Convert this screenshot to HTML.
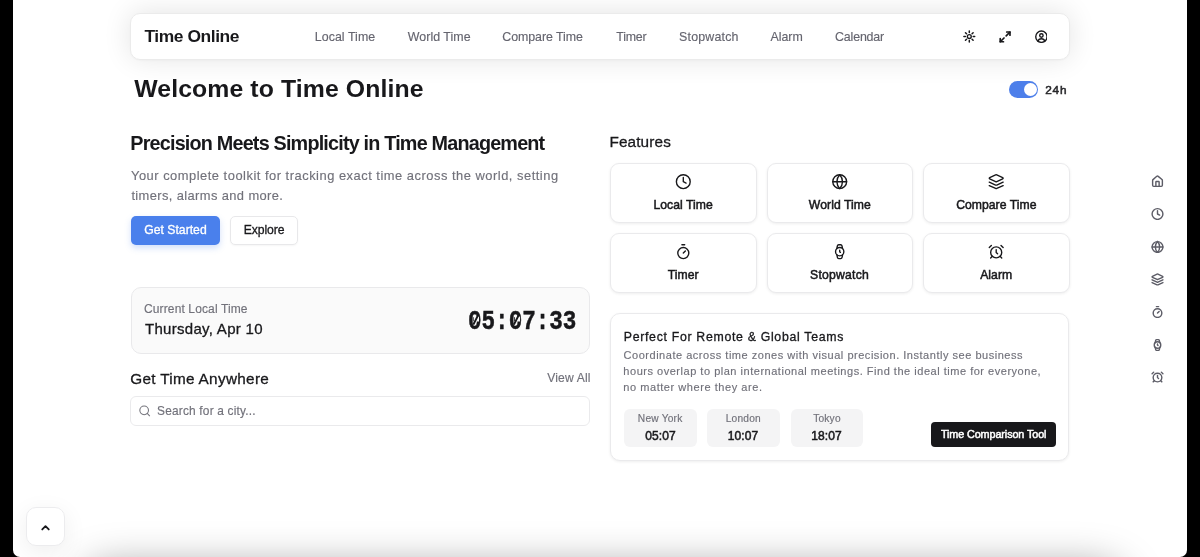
<!DOCTYPE html>
<html>
<head>
<meta charset="utf-8">
<style>
*{margin:0;padding:0;box-sizing:border-box;}
html,body{width:1200px;height:557px;overflow:hidden;background:#000;}
body{font-family:"Liberation Sans",sans-serif;color:#18181b;position:relative;}
.page{position:absolute;left:13px;top:-20px;width:1174px;height:577px;background:#fff;border-radius:0 0 7px 7px;overflow:hidden;}
.abs{position:absolute;white-space:nowrap;}
.nav{position:absolute;left:129.8px;top:13.3px;width:940px;height:46.6px;background:#fff;border-radius:10px;border:1px solid #ebebeb;box-shadow:0 -1px 28px rgba(0,0,0,0.11),0 1px 2px rgba(0,0,0,0.03);}
.t{position:absolute;white-space:nowrap;line-height:1;z-index:5;}
svg{position:absolute;z-index:5;fill:none;stroke:currentColor;stroke-linecap:round;stroke-linejoin:round;}
.card{position:absolute;background:#fff;border:1px solid #eaeaec;border-radius:9px;box-shadow:0 1px 3px rgba(0,0,0,0.07);}
.city{position:absolute;background:#f4f4f5;border-radius:6px;width:72.6px;height:38.7px;top:408.5px;}
</style>
</head>
<body>
<div class="page"></div>
<div id="root" style="position:absolute;left:0;top:0;width:1200px;height:557px;will-change:transform;">

<!-- NAV -->
<div class="nav"></div>
<div class="t" id="logo" style="left:144.38px;top:27.86px;font-size:17.40px;letter-spacing:-0.417px;font-weight:700;color:#18181b;">Time Online</div>
<div class="t" id="n1" style="left:314.81px;top:31.11px;font-size:12.40px;letter-spacing:0.051px;-webkit-text-stroke:0.15px #65656f;color:#65656f;">Local Time</div>
<div class="t" id="n2" style="left:407.84px;top:31.11px;font-size:12.40px;letter-spacing:0.032px;-webkit-text-stroke:0.15px #65656f;color:#65656f;">World Time</div>
<div class="t" id="n3" style="left:502.24px;top:30.91px;font-size:12.40px;letter-spacing:-0.056px;-webkit-text-stroke:0.15px #65656f;color:#65656f;">Compare Time</div>
<div class="t" id="n4" style="left:616.23px;top:31.11px;font-size:12.40px;letter-spacing:-0.179px;-webkit-text-stroke:0.15px #65656f;color:#65656f;">Timer</div>
<div class="t" id="n5" style="left:679.02px;top:30.91px;font-size:12.40px;letter-spacing:0.204px;-webkit-text-stroke:0.15px #65656f;color:#65656f;">Stopwatch</div>
<div class="t" id="n6" style="left:770.48px;top:31.11px;font-size:12.40px;letter-spacing:-0.010px;-webkit-text-stroke:0.15px #65656f;color:#65656f;">Alarm</div>
<div class="t" id="n7" style="left:835.10px;top:31.11px;font-size:12.40px;letter-spacing:-0.169px;-webkit-text-stroke:0.15px #65656f;color:#65656f;">Calendar</div>
<div class="t" id="welcome" style="left:134.21px;top:77.43px;font-size:24.80px;letter-spacing:0.105px;font-weight:700;color:#18181b;">Welcome to Time Online</div>
<div class="t" id="h24" style="left:1045.22px;top:85.47px;font-size:11.80px;letter-spacing:0.839px;-webkit-text-stroke:0.50px #27272a;color:#27272a;">24h</div>
<div class="t" id="prec" style="left:130.32px;top:133.83px;font-size:19.80px;letter-spacing:-0.806px;font-weight:700;color:#18181b;">Precision Meets Simplicity in Time Management</div>
<div class="t" id="p1" style="left:130.96px;top:169.82px;font-size:12.90px;letter-spacing:0.510px;-webkit-text-stroke:0.15px #71717a;color:#71717a;">Your complete toolkit for tracking exact time across the world, setting</div>
<div class="t" id="p2" style="left:131.38px;top:190.44px;font-size:12.90px;letter-spacing:0.390px;-webkit-text-stroke:0.15px #71717a;color:#71717a;">timers, alarms and more.</div>
<div class="t" id="btn1" style="left:144.29px;top:223.86px;font-size:12.20px;letter-spacing:0.005px;-webkit-text-stroke:0.30px #ffffff;color:#ffffff;">Get Started</div>
<div class="t" id="btn2" style="left:243.63px;top:224.36px;font-size:12.20px;letter-spacing:-0.079px;-webkit-text-stroke:0.30px #18181b;color:#18181b;">Explore</div>
<div class="t" id="clt" style="left:144.01px;top:302.99px;font-size:12.00px;letter-spacing:0.127px;-webkit-text-stroke:0.15px #71717a;color:#71717a;">Current Local Time</div>
<div class="t" id="date" style="left:144.97px;top:321.15px;font-size:15.00px;letter-spacing:0.295px;-webkit-text-stroke:0.30px #18181b;color:#18181b;">Thursday, Apr 10</div>
<div class="t" id="clock" style="left:468.44px;top:309.09px;font-size:27.00px;letter-spacing:0.000px;font-weight:700;-webkit-text-stroke:0.5px #18181b;color:#18181b;font-family:'Liberation Mono',monospace;transform:scaleX(0.8360);transform-origin:0 0;">05:07:33</div>
<div class="t" id="gta" style="left:130.29px;top:370.83px;font-size:15.30px;letter-spacing:0.316px;-webkit-text-stroke:0.30px #18181b;color:#18181b;">Get Time Anywhere</div>
<div class="t" id="va" style="left:547.17px;top:372.10px;font-size:12.10px;letter-spacing:0.176px;-webkit-text-stroke:0.15px #71717a;color:#71717a;">View All</div>
<div class="t" id="search" style="left:157.04px;top:405.98px;font-size:11.90px;letter-spacing:0.192px;-webkit-text-stroke:0.15px #71717a;color:#71717a;">Search for a city...</div>
<div class="t" id="feat" style="left:609.40px;top:134.32px;font-size:15.30px;letter-spacing:0.147px;-webkit-text-stroke:0.30px #18181b;color:#18181b;">Features</div>
<div class="t" id="f1" style="left:653.38px;top:199.23px;font-size:12.20px;letter-spacing:0.047px;-webkit-text-stroke:0.50px #18181b;color:#18181b;">Local Time</div>
<div class="t" id="f2" style="left:808.85px;top:199.18px;font-size:12.20px;letter-spacing:0.059px;-webkit-text-stroke:0.50px #18181b;color:#18181b;">World Time</div>
<div class="t" id="f3" style="left:956.14px;top:199.14px;font-size:12.20px;letter-spacing:0.033px;-webkit-text-stroke:0.50px #18181b;color:#18181b;">Compare Time</div>
<div class="t" id="f4" style="left:667.86px;top:269.08px;font-size:12.20px;letter-spacing:0.020px;-webkit-text-stroke:0.50px #18181b;color:#18181b;">Timer</div>
<div class="t" id="f5" style="left:810.04px;top:269.24px;font-size:12.20px;letter-spacing:0.240px;-webkit-text-stroke:0.50px #18181b;color:#18181b;">Stopwatch</div>
<div class="t" id="f6" style="left:980.18px;top:269.01px;font-size:12.20px;letter-spacing:0.046px;-webkit-text-stroke:0.50px #18181b;color:#18181b;">Alarm</div>
<div class="t" id="ptitle" style="left:623.77px;top:330.59px;font-size:12.30px;letter-spacing:0.695px;-webkit-text-stroke:0.30px #18181b;color:#18181b;">Perfect For Remote &amp; Global Teams</div>
<div class="t" id="pp1" style="left:623.55px;top:349.72px;font-size:11.00px;letter-spacing:0.524px;-webkit-text-stroke:0.15px #71717a;color:#71717a;">Coordinate across time zones with visual precision. Instantly see business</div>
<div class="t" id="pp2" style="left:623.37px;top:365.58px;font-size:11.00px;letter-spacing:0.520px;-webkit-text-stroke:0.15px #71717a;color:#71717a;">hours overlap to plan international meetings. Find the ideal time for everyone,</div>
<div class="t" id="pp3" style="left:623.29px;top:382.18px;font-size:11.00px;letter-spacing:0.555px;-webkit-text-stroke:0.15px #71717a;color:#71717a;">no matter where they are.</div>
<div class="t" id="c1" style="left:637.83px;top:413.85px;font-size:10.20px;letter-spacing:0.200px;-webkit-text-stroke:0.15px #71717a;color:#71717a;">New York</div>
<div class="t" id="c2" style="left:725.70px;top:413.73px;font-size:10.20px;letter-spacing:0.200px;-webkit-text-stroke:0.15px #71717a;color:#71717a;">London</div>
<div class="t" id="c3" style="left:813.17px;top:414.28px;font-size:10.20px;letter-spacing:0.200px;-webkit-text-stroke:0.15px #71717a;color:#71717a;">Tokyo</div>
<div class="t" id="ct1" style="left:645.30px;top:430.03px;font-size:12.00px;letter-spacing:0.100px;-webkit-text-stroke:0.50px #18181b;color:#18181b;">05:07</div>
<div class="t" id="ct2" style="left:727.80px;top:429.68px;font-size:12.00px;letter-spacing:0.100px;-webkit-text-stroke:0.50px #18181b;color:#18181b;">10:07</div>
<div class="t" id="ct3" style="left:811.30px;top:429.73px;font-size:12.00px;letter-spacing:0.100px;-webkit-text-stroke:0.50px #18181b;color:#18181b;">18:07</div>
<div class="t" id="tool" style="left:940.89px;top:428.57px;font-size:10.80px;letter-spacing:-0.093px;-webkit-text-stroke:0.50px #ffffff;color:#ffffff;">Time Comparison Tool</div>

<!-- nav icons -->
<svg style="left:950px;top:20px;color:#18181b" width="30" height="35" viewBox="0.000 0.000 30 35"><circle cx="19.30" cy="16.50" r="1.95" stroke-width="1.35"/><path d="M23.20 16.50L24.70 16.50 M22.06 19.26L23.12 20.32 M19.30 20.40L19.30 21.90 M16.54 19.26L15.48 20.32 M15.40 16.50L13.90 16.50 M16.54 13.74L15.48 12.68 M19.30 12.60L19.30 11.10 M22.06 13.74L23.12 12.68" stroke-width="1.5"/></svg>
<svg style="left:998px;top:30px;color:#18181b" width="13" height="13" viewBox="-1.108 -0.738 24 24" stroke-width="3.1"><polyline points="15 3 21 3 21 9"/><polyline points="9 21 3 21 3 15"/><line x1="21" x2="14" y1="3" y2="10"/><line x1="3" x2="10" y1="21" y2="14"/></svg>
<svg style="left:1034px;top:30px;color:#18181b" width="13.3" height="13.3" viewBox="-1.353 -0.090 24 24" stroke-width="2.5"><path d="M18.2 20.2Q17 15.6 12 15.6Q7 15.6 5.8 20.2"/><circle cx="12" cy="9.8" r="3.1"/><circle cx="12" cy="12" r="10.2"/></svg>

<!-- Welcome -->

<!-- toggle -->
<div class="abs" style="left:1009.2px;top:81.3px;width:29.3px;height:16.4px;border-radius:9px;background:#4d7fea;"></div>
<div class="abs" style="left:1023.7px;top:82.7px;width:13.6px;height:13.6px;border-radius:50%;background:#fff;"></div>

<!-- Hero -->

<div class="abs" style="left:130.7px;top:215.5px;width:89px;height:29px;border-radius:5px;background:#4a80ec;box-shadow:0 3px 6px rgba(74,128,236,0.25);"></div>
<div class="abs" style="left:230.4px;top:215.5px;width:68px;height:29px;border-radius:5px;background:#fff;border:1px solid #e8e8ea;box-shadow:0 1px 2px rgba(0,0,0,0.04);"></div>

<!-- Local time card -->
<svg style="left:465px;top:305px;z-index:6;stroke:none" width="60" height="30" viewBox="0.000 0.000 60 30"><rect x="9" y="11.5" width="5" height="5" fill="#fafafa"/><rect x="50" y="11.5" width="5" height="5" fill="#fafafa"/><path d="M8.3 19.6 13.4 9.6M48.9 19.6 54 9.6" stroke="#18181b" stroke-width="2" stroke-linecap="butt"/></svg>

<div class="abs" style="left:130.5px;top:287px;width:459.2px;height:66.5px;border-radius:10px;background:#fafafa;border:1px solid #e9e9eb;"></div>

<div class="abs" style="left:130.4px;top:396.4px;width:459.4px;height:29.2px;border-radius:6px;background:#fff;border:1px solid #eaeaec;"></div>
<svg style="left:138px;top:404px;color:#74747c" width="13" height="13" viewBox="-0.369 -0.738 24 24" stroke-width="2"><circle cx="11" cy="11" r="8"/><path d="m21 21-4.3-4.3"/></svg>

<!-- Features -->

<div class="card" style="left:610px;top:163.3px;width:146.5px;height:60px;"></div>
<div class="card" style="left:766.5px;top:163.3px;width:146.5px;height:60px;"></div>
<div class="card" style="left:923px;top:163.3px;width:146.5px;height:60px;"></div>
<div class="card" style="left:610px;top:233.4px;width:146.5px;height:60px;"></div>
<div class="card" style="left:766.5px;top:233.4px;width:146.5px;height:60px;"></div>
<div class="card" style="left:923px;top:233.4px;width:146.5px;height:60px;"></div>

<!-- feature icons -->
<svg style="left:675px;top:173px;color:#18181b" width="16.6" height="16.6" viewBox="0.000 -0.578 24 24" stroke-width="2"><circle cx="12" cy="12" r="10"/><polyline points="12 6 12 12 16 14"/></svg>
<svg style="left:831px;top:173px;color:#18181b" width="16.6" height="16.6" viewBox="-0.578 -0.578 24 24" stroke-width="2"><circle cx="12" cy="12" r="10"/><path d="M12 2a14.5 14.5 0 0 0 0 20 14.5 14.5 0 0 0 0-20"/><path d="M2 12h20"/></svg>
<svg style="left:987px;top:173px;color:#18181b" width="16.6" height="16.6" viewBox="-1.301 -0.578 24 24" stroke-width="2"><path d="m12.83 2.18a2 2 0 0 0-1.66 0L2.6 6.08a1 1 0 0 0 0 1.83l8.58 3.91a2 2 0 0 0 1.66 0l8.58-3.9a1 1 0 0 0 0-1.83Z"/><path d="m22 17.65-9.17 4.16a2 2 0 0 1-1.66 0L2 17.65"/><path d="m22 12.65-9.17 4.16a2 2 0 0 1-1.66 0L2 12.65"/></svg>
<svg style="left:675px;top:243px;color:#18181b" width="16.6" height="16.6" viewBox="0.000 -0.578 24 24" stroke-width="2"><line x1="10" x2="14" y1="2" y2="2"/><line x1="12" x2="15" y1="14" y2="11"/><circle cx="12" cy="14" r="8"/></svg>
<svg style="left:831px;top:243px;color:#18181b" width="16.6" height="16.6" viewBox="-0.578 -0.578 24 24" stroke-width="2"><circle cx="12" cy="12" r="6"/><polyline points="12 10 12 12 13 13"/><path d="m16.13 7.66-.81-4.05a2 2 0 0 0-2-1.61h-2.68a2 2 0 0 0-2 1.61l-.78 4.05"/><path d="m7.88 16.36.8 4a2 2 0 0 0 2 1.61h2.72a2 2 0 0 0 2-1.61l.81-4.05"/></svg>
<svg style="left:987px;top:243px;color:#18181b" width="16.6" height="16.6" viewBox="-1.301 -0.578 24 24" stroke-width="2"><circle cx="12" cy="13" r="8"/><path d="M12 9v4l2 2"/><path d="M5 3 2 6"/><path d="m22 6-3-3"/><path d="M6.38 18.7 4 21"/><path d="M17.64 18.67 20 21"/></svg>


<!-- Perfect card -->
<div class="card" style="left:610px;top:313px;width:459.3px;height:148px;border-radius:10px;"></div>

<div class="city" style="left:624px;"></div>
<div class="city" style="left:707.2px;"></div>
<div class="city" style="left:790.5px;"></div>

<div class="abs" style="left:931px;top:421.7px;width:124.7px;height:25.6px;border-radius:4px;background:#18181b;"></div>

<!-- side icons -->
<svg style="left:1151px;top:175px;color:#5c5c66" width="13" height="13" viewBox="0.000 0.000 24 24" stroke-width="2.6"><path d="M15 21v-8a1 1 0 0 0-1-1h-4a1 1 0 0 0-1 1v8"/><path d="M3 10a2 2 0 0 1 .709-1.528l7-5.999a2 2 0 0 1 2.582 0l7 5.999A2 2 0 0 1 21 10v9a2 2 0 0 1-2 2H5a2 2 0 0 1-2-2z"/></svg>
<svg style="left:1151px;top:207px;color:#5c5c66" width="13" height="13" viewBox="0.000 -0.923 24 24" stroke-width="2.6"><circle cx="12" cy="12" r="10"/><polyline points="12 6 12 12 16 14"/></svg>
<svg style="left:1151px;top:240px;color:#5c5c66" width="13" height="13" viewBox="0.000 -0.923 24 24" stroke-width="2.6"><circle cx="12" cy="12" r="10"/><path d="M12 2a14.5 14.5 0 0 0 0 20 14.5 14.5 0 0 0 0-20"/><path d="M2 12h20"/></svg>
<svg style="left:1151px;top:273px;color:#5c5c66" width="13" height="13" viewBox="0.000 0.000 24 24" stroke-width="2.6"><path d="m12.83 2.18a2 2 0 0 0-1.66 0L2.6 6.08a1 1 0 0 0 0 1.83l8.58 3.91a2 2 0 0 0 1.66 0l8.58-3.9a1 1 0 0 0 0-1.83Z"/><path d="m22 17.65-9.17 4.16a2 2 0 0 1-1.66 0L2 17.65"/><path d="m22 12.65-9.17 4.16a2 2 0 0 1-1.66 0L2 12.65"/></svg>
<svg style="left:1151px;top:305px;color:#5c5c66" width="13" height="13" viewBox="0.000 -0.923 24 24" stroke-width="2.6"><line x1="10" x2="14" y1="2" y2="2"/><line x1="12" x2="15" y1="14" y2="11"/><circle cx="12" cy="14" r="8"/></svg>
<svg style="left:1151px;top:338px;color:#5c5c66" width="13" height="13" viewBox="0.000 -0.923 24 24" stroke-width="2.6"><circle cx="12" cy="12" r="6"/><polyline points="12 10 12 12 13 13"/><path d="m16.13 7.66-.81-4.05a2 2 0 0 0-2-1.61h-2.68a2 2 0 0 0-2 1.61l-.78 4.05"/><path d="m7.88 16.36.8 4a2 2 0 0 0 2 1.61h2.72a2 2 0 0 0 2-1.61l.81-4.05"/></svg>
<svg style="left:1151px;top:370px;color:#5c5c66" width="13" height="13" viewBox="0.000 -0.923 24 24" stroke-width="2.6"><circle cx="12" cy="13" r="8"/><path d="M12 9v4l2 2"/><path d="M5 3 2 6"/><path d="m22 6-3-3"/><path d="M6.38 18.7 4 21"/><path d="M17.64 18.67 20 21"/></svg>

<!-- scroll top -->
<div class="abs" style="left:26px;top:507.2px;width:38.5px;height:38.6px;border-radius:10px;background:#fff;border:1px solid #ececee;box-shadow:0 6px 24px rgba(0,0,0,0.07);"></div>
<svg style="left:39px;top:521px;color:#18181b" width="13" height="13" viewBox="0.000 -0.554 24 24" stroke-width="3.4"><path d="m18 15-6-6-6 6"/></svg>

<!-- bottom shadow -->
<div class="abs" style="left:82px;top:566px;width:1043px;height:60px;border-radius:40px;background:#fff;box-shadow:0 0 40px rgba(0,0,0,0.38);"></div>
</div>
</body>
</html>
